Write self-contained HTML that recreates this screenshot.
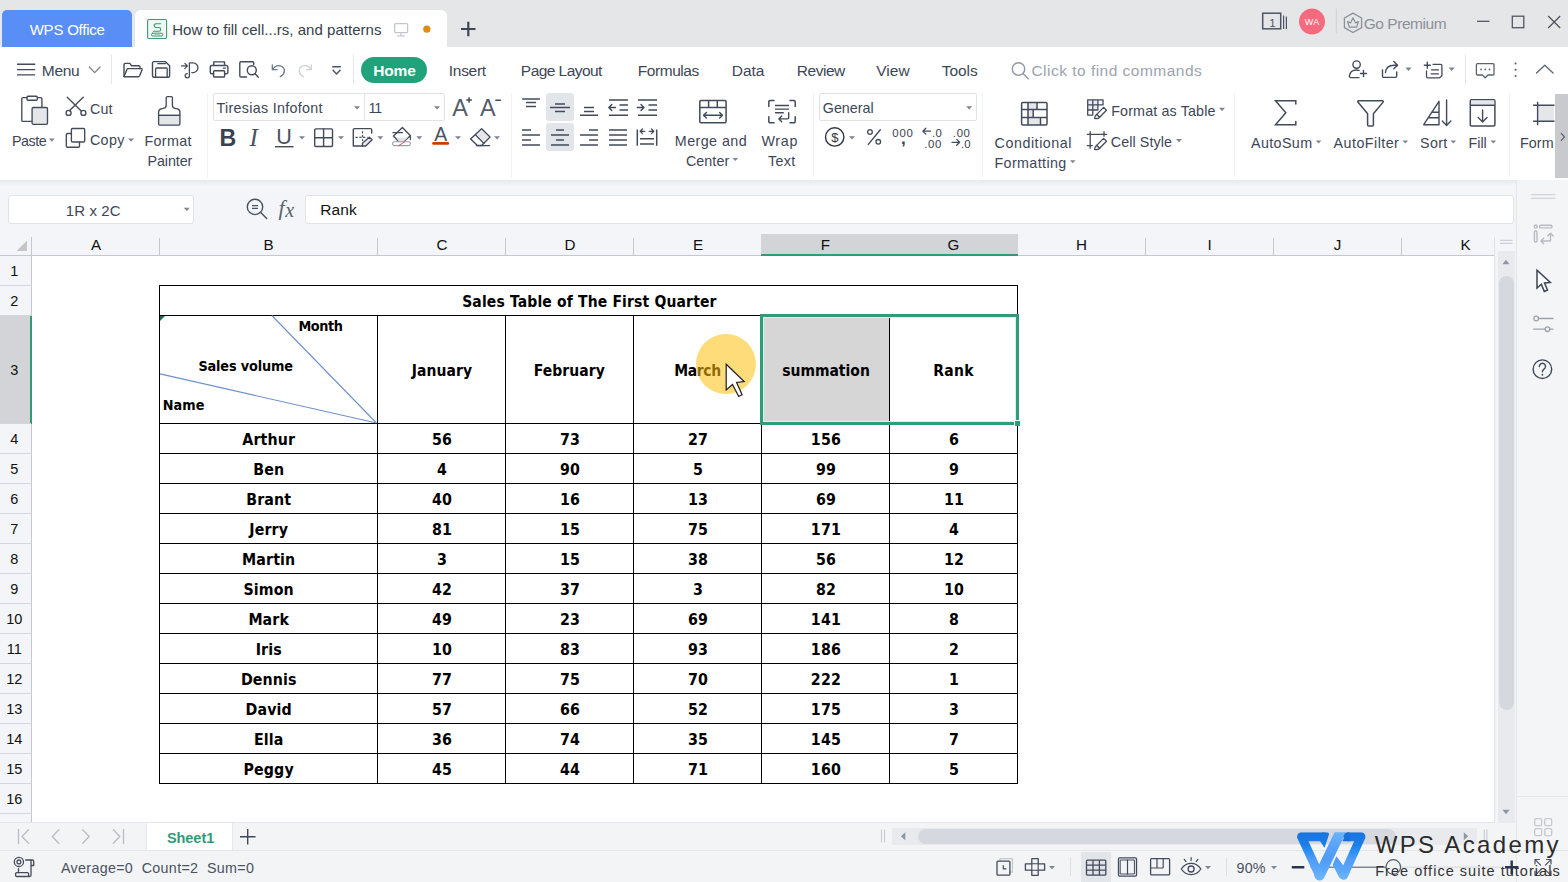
<!DOCTYPE html>
<html lang="en"><head><meta charset="utf-8"><title>WPS Spreadsheets</title>
<style>
html,body{margin:0;padding:0}
body{width:1568px;height:882px;position:relative;overflow:hidden;background:#fff;font-family:'Liberation Sans', sans-serif;}
.t{position:absolute;white-space:pre;line-height:1;}
.b{position:absolute;}
svg{position:absolute;left:0;top:0;overflow:visible}
</style></head><body>
<header id="titlebar">
<div class="b" style="left:0px;top:0px;width:1568px;height:47px;background:#e5e6e8;"></div>
<div class="b" style="left:2px;top:10px;width:130px;height:37px;background:#5a8ef7;border-radius:5px 5px 0 0;"></div>
<div class="b" style="left:135px;top:10px;width:312px;height:37px;background:#ffffff;border-radius:6px 6px 0 0;"></div>
<svg width="1568" height="882" viewBox="0 0 1568 882" fill="none" stroke-linecap="round" stroke-linejoin="round">
<g id="titlebar-icons">
<rect x="147.6" y="19.5" width="19" height="19" rx="1.4" fill="#eef9f4" stroke="#3c9876" stroke-width="1.1"/>
<path d="M160.600 23.700h-4.600a1.900 1.900 0 0 0 0 3.800h2.800a1.900 1.900 0 0 1 0 3.800h-5.300" stroke="#2f9c78" stroke-width="1.100"/>
<rect x="151.500" y="33.200" width="11.200" height="2.800" rx="1.200" stroke="#2f9c78" stroke-width="1"/>
<path d="M155.200 34.600h.1M157.100 34.600h.1M159 34.600h.1" stroke="#2f9c78" stroke-width=".9"/>
<g stroke="#c3c7cd" stroke-width="1.3"><rect x="394.6" y="23.6" width="13" height="9" rx="1"/><path d="M401 32.6v3M397.5 35.8h7"/></g>
<circle cx="426.8" cy="29.2" r="3.6" fill="#e08c14"/>
<path d="M461 29h14.5M468.3 21.8v14.5" stroke="#3d4656" stroke-width="2.2" stroke-linecap="butt"/>
<g stroke="#4d5564" stroke-width="1.5" stroke-linecap="butt" stroke-linejoin="miter"><rect x="1262.7" y="13.2" width="18" height="15.6"/><path d="M1283.6 15.5V29M1286.4 16.5V29" stroke-width="1.2"/></g>
<circle cx="1312" cy="21.6" r="13" fill="#f46a7e"/>
<path d="M1336.3 9v24" stroke="#cfd1d5" stroke-width="1"/>
<g stroke="#8b9098" stroke-width="1.300"><path d="M1353 13.100l8.600 4.850v9.700l-8.600 4.850-8.600-4.850v-9.700z"/><path d="M1347.500 21.500l3 1.400 2.500-5.100 2.500 5.100 3-1.400-1.900 5.700h-7.200z" stroke-width="1.200"/></g>
<g stroke="#4a5261" stroke-width="1.250" stroke-linecap="butt" stroke-linejoin="miter"><path d="M1477 21.3h12.5"/><rect x="1512.3" y="16.2" width="11.5" height="11.5"/><path d="M1548.2 16l12 12M1560.2 16l-12 12"/></g>
</g>
</svg>
<span class="t" id="t0" style="left:29.68px;top:22.00px;font-size:15px;color:#ffffff;letter-spacing:-0.217px;">WPS Office</span>
<span class="t" id="t1" style="left:172.18px;top:22.00px;font-size:15px;color:#363e4c;letter-spacing:0.024px;">How to fill cell...rs, and patterns</span>
<span class="t" id="t2" style="left:1363.65px;top:16.00px;font-size:15.5px;color:#8b9098;letter-spacing:-0.437px;">Go Premium</span>
<span class="t" id="t3" style="left:1304.71px;top:18.00px;font-size:9px;color:#ffffff;letter-spacing:0.287px;">WA</span>
<span class="t" id="t4" style="left:1269.30px;top:18.00px;font-size:11.5px;color:#4d5564;">1</span>
</header>
<nav id="menubar">
<div class="b" style="left:0px;top:47px;width:1568px;height:45px;background:#ffffff;"></div>
<div class="b" style="left:360.7px;top:57px;width:66.5px;height:25.8px;background:#20a37a;border-radius:13px;"></div>
<svg width="1568" height="882" viewBox="0 0 1568 882" fill="none" stroke-linecap="round" stroke-linejoin="round">
<g id="menubar-icons" stroke="#434b5a" stroke-width="1.4">
<path d="M17 64.3h18.2M17 69.6h18.2M17 74.9h18.2" stroke-linecap="butt"/>
<path d="M89.3 67l5.4 5.6 5.4-5.6" stroke="#7b8391" stroke-width="1.3"/>
<path d="M111.5 55v29M353.5 55v29" stroke="#e3e5e9" stroke-width="1"/>
<!-- open -->
<path d="M124 76.6V64.6a1.2 1.2 0 0 1 1.2-1.2h4.6l1.8 2.3h7.2a1.2 1.2 0 0 1 1.2 1.2v1.7"/>
<path d="M124 76.6l2.9-7.2a1.2 1.2 0 0 1 1.1-.8h13.3a.8.8 0 0 1 .8 1.1l-2.6 6.3a1.2 1.2 0 0 1-1.1.7H124.4z"/>
<!-- save -->
<path d="M154 61.600h11.300l4.300 4.200v9.900a1.500 1.500 0 0 1-1.500 1.500h-14.100a1.500 1.500 0 0 1-1.500-1.500V63.100a1.500 1.500 0 0 1 1.500-1.500z"/>
<path d="M155.600 77v-8.200a.8.800 0 0 1 .8-.8h10a.8.800 0 0 1 .8.800V77M157.800 63.600h7.600" stroke-width="1.300"/>
<!-- export -->
<path d="M181.600 65.900h5.800M184.900 63.400l2.500 2.500-2.500 2.500" stroke-width="1.300"/>
<path d="M189.400 75.800V62.800h3.600a4.900 4.900 0 0 1 0 9.800h-1.200M189.400 75.800a2.100 2.100 0 1 1-2.100-2.100" stroke-width="1.300"/>
<!-- print -->
<path d="M213.700 65.500v-3.600h10.800v3.600M213.500 73.700h-1.700a1.500 1.500 0 0 1-1.500-1.500v-5.200a1.500 1.500 0 0 1 1.500-1.500h14.600a1.500 1.500 0 0 1 1.500 1.500v5.200a1.500 1.500 0 0 1-1.500 1.500h-1.700"/>
<rect x="213.600" y="70.700" width="11" height="6.300" rx=".8"/><path d="M223.300 68.200h2" stroke-width="1.300"/>
<!-- preview -->
<path d="M246.500 77h-5.500a1.200 1.200 0 0 1-1.200-1.200V63a1.200 1.200 0 0 1 1.200-1.200h11.500a1.200 1.200 0 0 1 1.200 1.200v1.500"/>
<circle cx="251.800" cy="70.300" r="4.500"/><path d="M255.100 73.700l3.200 3.600"/>
<!-- undo / redo -->
<path d="M272.300 65v4.700h4.700M272.600 69.500c2-3.500 6-5 9.300-3 3.600 2.300 3.600 7.400-1.700 10.300" stroke="#6a7890" stroke-width="1.300"/>
<path d="M311.300 65v4.700h-4.700M311 69.500c-2-3.500-6-5-9.300-3-3.600 2.300-3.600 7.400 1.700 10.300" stroke="#cdd0d6" stroke-width="1.300"/>
<!-- more -->
<path d="M332.200 66.800h8.700M332.600 69.800l3.950 4.100 3.950-4.100" stroke-width="1.400" stroke="#4d5564" stroke-linecap="butt"/>
<!-- search -->
<g stroke="#8f97a4" stroke-width="1.400"><circle cx="1018.500" cy="69" r="6.200"/><path d="M1023 73.600l5.300 5.200"/></g>
<!-- right: add user -->
<circle cx="1356.600" cy="64.600" r="3.700"/><path d="M1359 77.600h-8.200a1.400 1.400 0 0 1-1.400-1.600c.5-3.600 3-6 7-6 1 0 1.800.1 2.600.4M1363.500 70.500v6M1360.500 73.500h6"/>
<!-- share -->
<path d="M1382.500 70v6a1.400 1.400 0 0 0 1.400 1.400h11.400a1.400 1.400 0 0 0 1.400-1.400V72"/><path d="M1385.500 72.500c.3-4.600 3.500-7.300 8.800-7.300h3M1393.800 61.600l3.800 3.600-3.800 3.600"/>
<path d="M1405.400 67.600h6.200l-3.100 3.400z" fill="#7d8593" stroke="none"/>
<!-- insert comment -->
<path d="M1424.300 65.300h6M1427.300 62.300v6"/><path d="M1433 64.300h7.600a1.300 1.300 0 0 1 1.300 1.300v10.200l-2.300 2h-11.800a1.300 1.300 0 0 1-1.300-1.300V71M1431.500 69.800h7M1431 73.800h7.500" stroke-width="1.300"/>
<path d="M1448.600 67.600h6.200l-3.100 3.400z" fill="#7d8593" stroke="none"/>
<path d="M1465.500 55v29" stroke="#e3e5e9" stroke-width="1"/>
<!-- comment -->
<path d="M1477.400 63.700h15.600a1 1 0 0 1 1 1v9.300a1 1 0 0 1-1 1h-5l-2.800 2.700-2.800-2.700h-5a1 1 0 0 1-1-1v-9.300a1 1 0 0 1 1-1z" stroke="#5b6371" stroke-width="1.300"/>
<path d="M1481 69.400h.1M1485.200 69.400h.1M1489.400 69.400h.1" stroke="#5b6371" stroke-width="1.700"/>
<path d="M1515.500 63.500h.1M1515.500 69.700h.1M1515.500 75.900h.1" stroke="#5b6371" stroke-width="2"/>
<path d="M1536.500 73l8.300-7.700 8.300 7.700" stroke="#5b6371" stroke-width="1.300"/>
</g>
</svg>
<span class="t" id="t5" style="left:41.85px;top:63.00px;font-size:15.5px;color:#3d4656;letter-spacing:-0.338px;">Menu</span>
<span class="t" id="t6" style="left:373.15px;top:63.00px;font-size:15.5px;color:#ffffff;font-weight:bold;letter-spacing:-0.113px;">Home</span>
<span class="t" id="t7" style="left:448.85px;top:63.00px;font-size:15.5px;color:#3d4656;letter-spacing:-0.306px;">Insert</span>
<span class="t" id="t8" style="left:520.85px;top:63.00px;font-size:15.5px;color:#3d4656;letter-spacing:-0.556px;">Page Layout</span>
<span class="t" id="t9" style="left:637.85px;top:63.00px;font-size:15.5px;color:#3d4656;letter-spacing:-0.460px;">Formulas</span>
<span class="t" id="t10" style="left:731.85px;top:63.00px;font-size:15.5px;color:#3d4656;letter-spacing:-0.031px;">Data</span>
<span class="t" id="t11" style="left:796.85px;top:63.00px;font-size:15.5px;color:#3d4656;letter-spacing:-0.483px;">Review</span>
<span class="t" id="t12" style="left:876.15px;top:63.00px;font-size:15.5px;color:#3d4656;letter-spacing:0.075px;">View</span>
<span class="t" id="t13" style="left:941.65px;top:63.00px;font-size:15.5px;color:#3d4656;letter-spacing:-0.012px;">Tools</span>
<span class="t" id="t14" style="left:1031.45px;top:63.00px;font-size:15.5px;color:#9ba3af;letter-spacing:0.482px;">Click to find commands</span>
</nav>
<div id="ribbon" role="toolbar">
<div class="b" style="left:0px;top:92px;width:1568px;height:88px;background:#ffffff;"></div>
<div class="b" style="left:213px;top:93px;width:231.5px;height:28px;background:#ffffff;border:1px solid #dfe2e6;border-radius:2px;box-sizing:border-box;"></div>
<div class="b" style="left:364px;top:94px;width:1px;height:26px;background:#e3e6ea;"></div>
<div class="b" style="left:819px;top:93px;width:157.5px;height:28px;background:#ffffff;border:1px solid #dfe2e6;border-radius:2px;box-sizing:border-box;"></div>
<div class="b" style="left:546px;top:93px;width:28px;height:27.6px;background:#e2e5e9;border-radius:3px;"></div>
<div class="b" style="left:546px;top:123px;width:28px;height:27.6px;background:#e2e5e9;border-radius:3px;"></div>
<div class="b" style="left:206.5px;top:93px;width:1px;height:84px;background:#eff1f3;"></div>
<div class="b" style="left:510.5px;top:93px;width:1px;height:84px;background:#eff1f3;"></div>
<div class="b" style="left:812.5px;top:93px;width:1px;height:84px;background:#eff1f3;"></div>
<div class="b" style="left:982px;top:93px;width:1px;height:84px;background:#eff1f3;"></div>
<div class="b" style="left:1234.3px;top:93px;width:1px;height:84px;background:#eff1f3;"></div>
<div class="b" style="left:1508.5px;top:93px;width:1px;height:84px;background:#eff1f3;"></div>
<div class="b" style="left:1555px;top:94px;width:13px;height:84px;background:#c9cacd;"></div>
<svg width="1568" height="882" viewBox="0 0 1568 882" fill="none" stroke-linecap="round" stroke-linejoin="round">
<g id="ribbon-a" stroke="#434b5a" stroke-width="1.350">
<!-- paste -->
<path d="M27 97.600h-4a1.200 1.200 0 0 0-1.200 1.200v21.400a1.200 1.200 0 0 0 1.200 1.200h8.800M37.300 97.600h3.400a1.200 1.200 0 0 1 1.200 1.200v8.400"/>
<rect x="27" y="96.200" width="10.300" height="4.100" rx="1"/>
<rect x="32.100" y="107.500" width="15.400" height="16.800" rx="1.200" fill="#e4e6ea"/>
<path d="M48.8 138.5h6l-3.0 3.2z" fill="#7d8593" stroke="none"/>
<!-- cut -->
<path d="M67.200 97.300l13.800 13.500M83.200 97.300l-13.800 13.500"/><circle cx="68.600" cy="112.900" r="2.500"/><circle cx="83.400" cy="112.900" r="2.500"/>
<!-- copy -->
<rect x="71.400" y="128.500" width="13.300" height="13.500" rx="1.200"/>
<path d="M71.400 133.500h-3.900a1.200 1.200 0 0 0-1.200 1.200v11.400a1.200 1.200 0 0 0 1.200 1.200h10.800a1.200 1.200 0 0 0 1.200-1.200v-4"/>
<path d="M128 138.5h6l-3.0 3.2z" fill="#7d8593" stroke="none"/>
<!-- format painter -->
<path d="M159.200 115.400h20" />
<rect x="159.200" y="115.400" width="20" height="9.500" fill="#e4e6ea" stroke="none"/>
<path d="M166.200 97.800a1.200 1.200 0 0 1 1.200-1.200h3.800a1.200 1.200 0 0 1 1.200 1.200v7.400q0 2.600 2.600 3.100l2.400.5q2.500.6 2.500 3.200v12.100a1 1 0 0 1-1 1h-19.300a1 1 0 0 1-1-1v-12.100q0-2.600 2.500-3.200l2.400-.5q2.700-.5 2.700-3.100z"/>
<path d="M158.600 115.400h21.200"/>
</g>
<g id="ribbon-font" stroke="#434b5a" stroke-width="1.4">
<path d="M354 106.3h6l-3.0 3.2z" fill="#7d8593" stroke="none"/><path d="M434 106.3h6l-3.0 3.2z" fill="#7d8593" stroke="none"/>
<path d="M466.300 100h5.600M469.100 97.200v5.600M495.300 100.200h5.600" stroke-width="1.500" stroke-linecap="butt"/>
<path d="M275 146.700h18.600" stroke-linecap="butt"/><path d="M299 136.3h6l-3.0 3.2z" fill="#7d8593" stroke="none"/>
<rect x="314.700" y="128.900" width="17.800" height="17.600" rx="1"/><path d="M323.600 129v17.400M314.800 137.700h17.600"/><path d="M338 136.3h6l-3.0 3.2z" fill="#7d8593" stroke="none"/>
<!-- cell format -->
<path d="M371.700 133v-3.200a1.200 1.200 0 0 0-1.200-1.200h-16a1.200 1.200 0 0 0-1.200 1.200v16.200h9"/>
<path d="M355.500 137.300h12M362.500 131.300v11" stroke-dasharray="2.200 1.600" stroke-width="1.200" stroke-linecap="butt"/>
<path d="M369.300 137.200l2.800 2.600-6.300 6.200h-3.400v-2.800z" fill="#e4e6ea" stroke-width="1.300"/><path d="M377.3 136.3h6l-3.0 3.2z" fill="#7d8593" stroke="none"/>
<!-- fill bucket -->
<path d="M402.400 127.500l8 8.300-7.200 6.200h-4l-5.700-6z" /><path d="M393 132.700h9.500M410.400 136v3.500" stroke-width="1.300"/>
<path d="M396 137.500h12l-4.800 4.300h-4z" fill="#dfe2e6" stroke="none"/>
<rect x="392.600" y="141.800" width="17.800" height="3.800" rx="1.800" stroke="#9b9fa6" stroke-width="1.100" fill="#fff"/><path d="M399 145.400l5.500-3.400" stroke="#d9472b" stroke-width=".9"/><path d="M416.3 136.3h6l-3.0 3.2z" fill="#7d8593" stroke="none"/>
<!-- font color -->
<rect x="432.200" y="142" width="16.900" height="2.800" rx="1.300" fill="#d2380f" stroke="none"/><path d="M455 136.3h6l-3.0 3.2z" fill="#7d8593" stroke="none"/>
<!-- eraser -->
<path d="M481.600 128.800l8.400 8.300-8.400 8.400h-4.200l-6.800-6.600z"/><path d="M475.500 134.800l8.300 8.400M476.500 145.600h13"/>
<path d="M481.600 130.200l7 6.900-4.900 4.900-6.900-7z" fill="#e4e6ea" stroke="none"/><path d="M494 136.3h6l-3.0 3.2z" fill="#7d8593" stroke="none"/>
</g>
<g id="ribbon-align" stroke="#434b5a" stroke-width="1.500" stroke-linecap="butt">
<path d="M522.2 98.9H539.9M526 102.6H536M526 106.4H536M555 104H565M550 107.6H570M555 111.4H565M584 107.4H594M584 111.4H594M580 115.2H598M609 99.9H628M619.5 105H628M619.5 110H628M609 115.2H628M638 99.9H657M648.5 105H657M648.5 110H657M638 115.2H657M522 130.1H531M522 135.1H540M522 140.1H531M522 145.1H540M556 130.1H564M551 135.1H569M556 140.1H564M551 145.1H569M589 130.1H598M580 135.1H598M589 140.1H598M580 145.1H598M609 130.1H627M609 135.1H627M609 140.1H627M609 145.1H627M640 138.8H654M640 144H654M637.3 129.600V145.800M656.700 129.600V145.800"/>
<path d="M608.800 107.500h6.700M611.800 104.500l-3 3 3 3M637.300 107.500h6.700M641 104.500l3 3-3 3" stroke-linecap="round" stroke-width="1.400"/>
<path d="M640.300 131.300h4.500M642.500 129l-2.300 2.300 2.300 2.300M653.700 131.300h-4.500M651.500 129l2.300 2.300-2.300 2.300" stroke-linecap="round" stroke-width="1.300"/>
</g>
<g id="ribbon-merge" stroke="#434b5a" stroke-width="1.500">
<rect x="699.800" y="100.500" width="26.300" height="22.200" rx="1.200"/><path d="M699.800 107.600h26.300M708.600 100.500v7.100M717.300 100.500v7.100" stroke-linecap="butt"/>
<path d="M703.600 115.300h18.800M706.400 112.500l-2.900 2.800 2.900 2.800M719.600 112.500l2.900 2.800-2.900 2.800" stroke-width="1.400"/>
<path d="M732.5 158.1h5.6l-2.8 3z" fill="#7d8593" stroke="none"/>
<path d="M768.800 106.500v-4.800a1.200 1.200 0 0 1 1.200-1.200h4M790 100.500h4a1.200 1.200 0 0 1 1.200 1.200v4.800M795.200 116.700v4.800a1.200 1.200 0 0 1-1.200 1.200h-4M774 122.700h-4a1.200 1.200 0 0 1-1.200-1.200v-4.800"/>
<path d="M775 105.500h14M775 109.100h14M775 112.700h8.800" stroke-linecap="butt" stroke-width="1.400"/>
<path d="M788.700 112.800v5a1.100 1.100 0 0 1-1.100 1.100h-8.400M781.700 116.100l-2.800 2.800 2.800 2.800" stroke-width="1.400"/>
<!-- number format -->
<circle cx="834.700" cy="136.900" r="9.200" stroke="#2e3440" stroke-width="1.400"/><path d="M849 136.3h6l-3.0 3.2z" fill="#7d8593" stroke="none"/>
<circle cx="870" cy="132" r="2.300" stroke-width="1.300"/><circle cx="878.300" cy="141.800" r="2.300" stroke-width="1.300"/><path d="M880.300 129.800l-12 14.600" stroke-width="1.400"/>
<path d="M930.500 131.200h-7.600M925.800 128.300l-2.900 2.900 2.900 2.900M952 142.300h7.600M956.700 139.400l2.900 2.900-2.900 2.900" stroke-width="1.300"/>
<path d="M966.2 106.3h6l-3.0 3.2z" fill="#7d8593" stroke="none"/>
</g>
<g id="ribbon-styles" stroke="#434b5a" stroke-width="1.500">
<rect x="1028" y="102.400" width="9" height="7.200" fill="#e4e6ea" stroke="none"/><rect x="1028" y="109.600" width="5.200" height="7.800" fill="#e4e6ea" stroke="none"/><rect x="1028" y="117.400" width="12.500" height="7.500" fill="#e4e6ea" stroke="none"/>
<rect x="1021.600" y="102.400" width="25.400" height="22.500" rx="1.200"/>
<path d="M1021.600 109.600h25.400M1021.600 117.400h25.400M1028 102.400v22.500M1037 102.400v7.200M1033.200 109.600v7.800M1040.500 117.400v7.500" stroke-linecap="butt"/>
<path d="M1070 160.3h5.6l-2.8 3z" fill="#7d8593" stroke="none"/>
<g stroke-width="1.300" stroke-linecap="butt"><rect x="1087.800" y="100" width="10.200" height="10.200" fill="#e9ebee" stroke="none"/>
<path d="M1087.700 99.800h15.300v5.100h-15.300zM1087.700 104.900v10.200h5.100v-15.300M1087.700 110h10.200v-10.200"/></g>
<g transform="translate(0 0)"><path d="M1103.600 107.400l2.900 2.800-6.900 7-2.900-2.800z" stroke-width="1.300"/><path d="M1096.700 114.400l2.900 2.800c-.6 1.400-2.600 1.700-5.100 1.300.3-1.900.9-3.500 2.200-4.100z" fill="#e4e6ea" stroke-width="1.200"/></g>
<path d="M1219 107.8h6l-3.0 3.2z" fill="#7d8593" stroke="none"/>
<g stroke-width="1.300" stroke-linecap="butt"><path d="M1086.800 134.400h20.400M1090.200 131.300v17.500M1086.800 145.700h6M1104 131.300v5.400"/></g>
<g transform="translate(0 31)"><path d="M1103.600 107.400l2.900 2.800-6.900 7-2.900-2.800z" stroke-width="1.300"/><path d="M1096.700 114.400l2.900 2.800c-.6 1.400-2.600 1.700-5.100 1.300.3-1.900.9-3.500 2.200-4.100z" fill="#e4e6ea" stroke-width="1.200"/></g>
<path d="M1176 139h6l-3.0 3.2z" fill="#7d8593" stroke="none"/>
<!-- autosum -->
<path d="M1295.800 104v-3.200h-20.300l10.300 11.900-10.300 12h20.300v-3.200" stroke-width="1.500" stroke-linejoin="miter"/><path d="M1315.8 140.5h5.6l-2.8 3z" fill="#7d8593" stroke="none"/>
<!-- autofilter -->
<path d="M1358.500 100.800h24a.8.800 0 0 1 .6 1.300l-9.700 11.600v11.200a1 1 0 0 1-1 1h-3.800a1 1 0 0 1-1-1v-11.200l-9.700-11.600a.8.800 0 0 1 .6-1.300z" stroke-width="1.500"/><path d="M1402.5 140.5h5.6l-2.8 3z" fill="#7d8593" stroke="none"/>
<!-- sort -->
<path d="M1439 101.300v23.400h-15.300zM1431.500 112.300h7.500M1428 117.700h11" stroke-width="1.400"/><path d="M1446.600 100v25.300M1442.300 121l4.300 4.600 4.300-4.600" stroke-width="1.400"/><path d="M1450.5 140.5h5.6l-2.8 3z" fill="#7d8593" stroke="none"/>
<!-- fill -->
<rect x="1470.300" y="99.700" width="24.600" height="26.300" rx="1.200" stroke-width="1.500"/><rect x="1471" y="100.400" width="23.200" height="4.600" fill="#e4e6ea" stroke="none"/><path d="M1470.300 105.300h24.600" stroke-linecap="butt"/><path d="M1482.600 110v11.500M1478.200 117.500l4.400 4.400 4.400-4.400" stroke-width="1.400"/><path d="M1490.5 140.5h5.6l-2.8 3z" fill="#7d8593" stroke="none"/>
<!-- format (cut off) -->
<rect x="1538" y="105.500" width="16" height="15.500" fill="#e4e6ea" stroke="none"/><path d="M1533 105.200h21.500M1533 121.300h21.500M1537.600 101.700v23.600" stroke-width="1.400" stroke-linecap="butt"/>
<path d="M1561.300 133.300l3.200 3.500-3.200 3.500" stroke="#555d6b" stroke-width="1.200"/>
</g>
</svg>
<span class="t" id="t15" style="left:11.91px;top:134.00px;font-size:14.3px;color:#3d4656;letter-spacing:-0.452px;">Paste</span>
<span class="t" id="t16" style="left:89.91px;top:102.00px;font-size:14.3px;color:#3d4656;letter-spacing:0.184px;">Cut</span>
<span class="t" id="t17" style="left:89.91px;top:133.00px;font-size:14.3px;color:#3d4656;letter-spacing:0.353px;">Copy</span>
<span class="t" id="t18" style="left:144.51px;top:134.00px;font-size:14.3px;color:#3d4656;letter-spacing:0.320px;">Format</span>
<span class="t" id="t19" style="left:147.51px;top:154.00px;font-size:14.3px;color:#3d4656;letter-spacing:-0.087px;">Painter</span>
<span class="t" id="t20" style="left:216.51px;top:101.00px;font-size:14.3px;color:#3d4656;letter-spacing:0.295px;">Tiresias Infofont</span>
<span class="t" id="t21" style="left:368.41px;top:101.00px;font-size:14.3px;color:#3d4656;letter-spacing:-0.971px;">11</span>
<span class="t" id="t22" style="left:674.81px;top:134.00px;font-size:14.3px;color:#3d4656;letter-spacing:0.438px;">Merge and</span>
<span class="t" id="t23" style="left:686.01px;top:154.00px;font-size:14.3px;color:#3d4656;letter-spacing:0.047px;">Center</span>
<span class="t" id="t24" style="left:761.41px;top:134.00px;font-size:14.3px;color:#3d4656;letter-spacing:0.724px;">Wrap</span>
<span class="t" id="t25" style="left:768.01px;top:154.00px;font-size:14.3px;color:#3d4656;letter-spacing:0.367px;">Text</span>
<span class="t" id="t26" style="left:822.81px;top:101.00px;font-size:14.3px;color:#3d4656;">General</span>
<span class="t" id="t27" style="left:994.61px;top:136.00px;font-size:14.3px;color:#3d4656;letter-spacing:0.532px;">Conditional</span>
<span class="t" id="t28" style="left:994.41px;top:156.00px;font-size:14.3px;color:#3d4656;letter-spacing:0.396px;">Formatting</span>
<span class="t" id="t29" style="left:1111.21px;top:104.00px;font-size:14.3px;color:#3d4656;letter-spacing:0.143px;">Format as Table</span>
<span class="t" id="t30" style="left:1110.81px;top:135.00px;font-size:14.3px;color:#3d4656;letter-spacing:0.091px;">Cell Style</span>
<span class="t" id="t31" style="left:1251.01px;top:136.00px;font-size:14.3px;color:#3d4656;letter-spacing:0.384px;">AutoSum</span>
<span class="t" id="t32" style="left:1333.61px;top:136.00px;font-size:14.3px;color:#3d4656;letter-spacing:0.451px;">AutoFilter</span>
<span class="t" id="t33" style="left:1420.01px;top:136.00px;font-size:14.3px;color:#3d4656;letter-spacing:0.367px;">Sort</span>
<span class="t" id="t34" style="left:1468.61px;top:136.00px;font-size:14.3px;color:#3d4656;letter-spacing:-0.041px;">Fill</span>
<span class="t" id="t35" style="left:1519.91px;top:136.00px;font-size:14.3px;color:#3d4656;letter-spacing:0.111px;">Form</span>
<span class="t" id="t36" style="left:452.31px;top:97.00px;font-size:23.4px;color:#555d6b;letter-spacing:1.248px;">A</span>
<span class="t" id="t37" style="left:479.91px;top:97.00px;font-size:23.4px;color:#555d6b;letter-spacing:1.648px;">A</span>
<span class="t" id="t38" style="left:219.52px;top:127.00px;font-size:23.2px;color:#3a4252;font-weight:bold;letter-spacing:-0.414px;">B</span>
<span class="t" id="t39" style="left:249.62px;top:125.00px;font-size:25px;color:#4a5261;font-style:italic;font-family:'Liberation Serif', serif;letter-spacing:4.297px;">I</span>
<span class="t" id="t40" style="left:276.21px;top:126.00px;font-size:21.6px;color:#4a5261;letter-spacing:0.659px;">U</span>
<span class="t" id="t41" style="left:434.13px;top:125.00px;font-size:19.5px;color:#4a5261;letter-spacing:0.632px;">A</span>
<span class="t" id="t42" style="left:831.20px;top:131.00px;font-size:13px;color:#2e3440;">$</span>
<span class="t" id="t43" style="left:892.37px;top:128.00px;font-size:11.4px;color:#3a4150;letter-spacing:0.794px;">000</span>
<span class="t" id="t44" style="left:901.07px;top:130.00px;font-size:17px;color:#3a4150;font-weight:bold;letter-spacing:0.251px;">,</span>
<span class="t" id="t45" style="left:931.97px;top:128.00px;font-size:11.4px;color:#3a4150;letter-spacing:0.248px;">.0</span>
<span class="t" id="t46" style="left:924.37px;top:139.00px;font-size:11.4px;color:#3a4150;letter-spacing:0.584px;">.00</span>
<span class="t" id="t47" style="left:952.87px;top:128.00px;font-size:11.4px;color:#3a4150;letter-spacing:0.618px;">.00</span>
<span class="t" id="t48" style="left:960.97px;top:139.00px;font-size:11.4px;color:#3a4150;letter-spacing:0.048px;">.0</span>
</div>
<div id="formulabar" role="group">
<div class="b" style="left:0px;top:180px;width:1568px;height:5px;background:linear-gradient(#e6e8eb,#f2f4f7);"></div>
<div class="b" style="left:0px;top:185px;width:1568px;height:49px;background:#f3f5f8;"></div>
<div class="b" style="left:8px;top:195px;width:185.5px;height:28.5px;background:#ffffff;border:1px solid #e0e3e7;border-radius:3px;box-sizing:border-box;"></div>
<div class="b" style="left:305px;top:195px;width:1208.5px;height:28.5px;background:#ffffff;border:1px solid #e0e3e7;border-radius:3px;box-sizing:border-box;"></div>
<svg width="1568" height="882" viewBox="0 0 1568 882" fill="none" stroke-linecap="round" stroke-linejoin="round">
<g id="fbar" stroke="#4a5261" stroke-width="1.400">
<path d="M183.8 207.8h6l-3.0 3.2z" fill="#7d8593" stroke="none"/>
<circle cx="255" cy="206.900" r="7.700"/><path d="M260.700 212.600l6 6"/><path d="M252 205.600h6M252 208.400h6" stroke-width="1.200" stroke-linecap="butt"/>
</g>
</svg>
<span class="t" id="t49" style="left:65.67px;top:203.00px;font-size:15px;color:#3d4656;letter-spacing:0.127px;">1R x 2C</span>
<span class="t" id="t50" style="left:320.15px;top:202.00px;font-size:15.5px;color:#111111;letter-spacing:0.110px;">Rank</span>
<span class="t" id="t51" style="left:278.50px;top:197.00px;font-size:22px;color:#5a6270;font-style:italic;font-family:'Liberation Serif', serif;">f</span>
<span class="t" id="t52" style="left:285.30px;top:200.00px;font-size:20px;color:#5a6270;font-style:italic;font-family:'Liberation Serif', serif;">x</span>
</div>
<main id="sheet">
<div class="b" style="left:0px;top:234px;width:1516px;height:22px;background:#f3f5f8;"></div>
<div class="b" style="left:0px;top:256px;width:31px;height:567px;background:#f3f5f8;"></div>
<div class="b" style="left:1495px;top:234px;width:21px;height:589px;background:#f3f5f8;"></div>
<div class="b" style="left:32px;top:256px;width:1463px;height:567px;background:#ffffff;"></div>
<div class="b" style="left:761px;top:234px;width:257px;height:21px;background:#d2d4d8;"></div>
<div class="b" style="left:0px;top:255px;width:1495px;height:1px;background:#c3c8d1;"></div>
<div class="b" style="left:761px;top:254px;width:257px;height:2px;background:#2f9c78;"></div>
<div class="b" style="left:31px;top:237px;width:1px;height:586px;background:#c3c8d1;"></div>
<div class="b" style="left:0px;top:316px;width:31px;height:107px;background:#d2d4d8;"></div>
<div class="b" style="left:30px;top:316px;width:2px;height:108px;background:#2f9c78;"></div>
<div class="b" style="left:1494px;top:237px;width:1px;height:586px;background:#dfe2e7;"></div>
<div class="b" style="left:159px;top:238px;width:1px;height:17px;background:#c3c8d1;"></div>
<div class="b" style="left:377px;top:238px;width:1px;height:17px;background:#c3c8d1;"></div>
<div class="b" style="left:505px;top:238px;width:1px;height:17px;background:#c3c8d1;"></div>
<div class="b" style="left:633px;top:238px;width:1px;height:17px;background:#c3c8d1;"></div>
<div class="b" style="left:1145px;top:238px;width:1px;height:17px;background:#c3c8d1;"></div>
<div class="b" style="left:1273px;top:238px;width:1px;height:17px;background:#c3c8d1;"></div>
<div class="b" style="left:1401px;top:238px;width:1px;height:17px;background:#c3c8d1;"></div>
<div class="b" style="left:0px;top:285px;width:31px;height:1px;background:#d3d7de;"></div>
<div class="b" style="left:0px;top:315px;width:31px;height:1px;background:#d3d7de;"></div>
<div class="b" style="left:0px;top:423px;width:31px;height:1px;background:#d3d7de;"></div>
<div class="b" style="left:0px;top:453px;width:31px;height:1px;background:#d3d7de;"></div>
<div class="b" style="left:0px;top:483px;width:31px;height:1px;background:#d3d7de;"></div>
<div class="b" style="left:0px;top:513px;width:31px;height:1px;background:#d3d7de;"></div>
<div class="b" style="left:0px;top:543px;width:31px;height:1px;background:#d3d7de;"></div>
<div class="b" style="left:0px;top:573px;width:31px;height:1px;background:#d3d7de;"></div>
<div class="b" style="left:0px;top:603px;width:31px;height:1px;background:#d3d7de;"></div>
<div class="b" style="left:0px;top:633px;width:31px;height:1px;background:#d3d7de;"></div>
<div class="b" style="left:0px;top:663px;width:31px;height:1px;background:#d3d7de;"></div>
<div class="b" style="left:0px;top:693px;width:31px;height:1px;background:#d3d7de;"></div>
<div class="b" style="left:0px;top:723px;width:31px;height:1px;background:#d3d7de;"></div>
<div class="b" style="left:0px;top:753px;width:31px;height:1px;background:#d3d7de;"></div>
<div class="b" style="left:0px;top:783px;width:31px;height:1px;background:#d3d7de;"></div>
<div class="b" style="left:0px;top:813px;width:31px;height:1px;background:#d3d7de;"></div>
<div class="b" style="left:764px;top:318px;width:125px;height:104px;background:#d6d6d6;"></div>
<div class="b" style="left:159px;top:285px;width:859px;height:1px;background:#000000;"></div>
<div class="b" style="left:159px;top:315px;width:859px;height:1px;background:#000000;"></div>
<div class="b" style="left:159px;top:423px;width:859px;height:1px;background:#000000;"></div>
<div class="b" style="left:159px;top:453px;width:859px;height:1px;background:#000000;"></div>
<div class="b" style="left:159px;top:483px;width:859px;height:1px;background:#000000;"></div>
<div class="b" style="left:159px;top:513px;width:859px;height:1px;background:#000000;"></div>
<div class="b" style="left:159px;top:543px;width:859px;height:1px;background:#000000;"></div>
<div class="b" style="left:159px;top:573px;width:859px;height:1px;background:#000000;"></div>
<div class="b" style="left:159px;top:603px;width:859px;height:1px;background:#000000;"></div>
<div class="b" style="left:159px;top:633px;width:859px;height:1px;background:#000000;"></div>
<div class="b" style="left:159px;top:663px;width:859px;height:1px;background:#000000;"></div>
<div class="b" style="left:159px;top:693px;width:859px;height:1px;background:#000000;"></div>
<div class="b" style="left:159px;top:723px;width:859px;height:1px;background:#000000;"></div>
<div class="b" style="left:159px;top:753px;width:859px;height:1px;background:#000000;"></div>
<div class="b" style="left:159px;top:783px;width:859px;height:1px;background:#000000;"></div>
<div class="b" style="left:159px;top:285px;width:1px;height:499px;background:#000000;"></div>
<div class="b" style="left:1017px;top:285px;width:1px;height:499px;background:#000000;"></div>
<div class="b" style="left:377px;top:315px;width:1px;height:469px;background:#000000;"></div>
<div class="b" style="left:505px;top:315px;width:1px;height:469px;background:#000000;"></div>
<div class="b" style="left:633px;top:315px;width:1px;height:469px;background:#000000;"></div>
<div class="b" style="left:761px;top:315px;width:1px;height:469px;background:#000000;"></div>
<div class="b" style="left:889px;top:315px;width:1px;height:469px;background:#000000;"></div>
<div class="b" style="left:760px;top:314px;width:259px;height:111px;background:transparent;border:3px solid #2f9c78;box-sizing:border-box;"></div>
<div class="b" style="left:763px;top:317px;width:253px;height:105px;background:transparent;border:1px solid #d6f3ef;box-sizing:border-box;"></div>
<div class="b" style="left:1014px;top:420px;width:6px;height:6px;background:#ffffff;"></div>
<div class="b" style="left:1015px;top:421px;width:5px;height:5px;background:#2f9c78;"></div>
<svg width="1568" height="882" viewBox="0 0 1568 882" fill="none" stroke-linecap="round" stroke-linejoin="round">
<path d="M27 240.500v10.500h-10.500z" fill="#c6c6c6" stroke="none"/>
<path d="M271.800 315.500L376.500 423M160 373.900L376.500 423" stroke="#6f90cb" stroke-width="1.100" stroke-linecap="butt"/>
<path d="M160 316h5l-5 5z" fill="#1f6b4c" stroke="none"/>
</svg>
<span class="t" id="t53" style="left:66.00px;top:237.00px;font-size:15.2px;color:#111;width:60px;text-align:center;">A</span>
<span class="t" id="t54" style="left:238.50px;top:237.00px;font-size:15.2px;color:#111;width:60px;text-align:center;">B</span>
<span class="t" id="t55" style="left:412.00px;top:237.00px;font-size:15.2px;color:#111;width:60px;text-align:center;">C</span>
<span class="t" id="t56" style="left:540.00px;top:237.00px;font-size:15.2px;color:#111;width:60px;text-align:center;">D</span>
<span class="t" id="t57" style="left:668.00px;top:237.00px;font-size:15.2px;color:#111;width:60px;text-align:center;">E</span>
<span class="t" id="t58" style="left:795.50px;top:237.00px;font-size:15.2px;color:#111;width:60px;text-align:center;">F</span>
<span class="t" id="t59" style="left:923.50px;top:237.00px;font-size:15.2px;color:#111;width:60px;text-align:center;">G</span>
<span class="t" id="t60" style="left:1051.50px;top:237.00px;font-size:15.2px;color:#111;width:60px;text-align:center;">H</span>
<span class="t" id="t61" style="left:1179.50px;top:237.00px;font-size:15.2px;color:#111;width:60px;text-align:center;">I</span>
<span class="t" id="t62" style="left:1307.50px;top:237.00px;font-size:15.2px;color:#111;width:60px;text-align:center;">J</span>
<span class="t" id="t63" style="left:1435.50px;top:237.00px;font-size:15.2px;color:#111;width:60px;text-align:center;">K</span>
<span class="t" id="t64" style="left:-1.30px;top:264.00px;font-size:14.5px;color:#111;width:31px;text-align:center;">1</span>
<span class="t" id="t65" style="left:-1.30px;top:294.00px;font-size:14.5px;color:#111;width:31px;text-align:center;">2</span>
<span class="t" id="t66" style="left:-1.30px;top:363.00px;font-size:14.5px;color:#111;width:31px;text-align:center;">3</span>
<span class="t" id="t67" style="left:-1.30px;top:432.00px;font-size:14.5px;color:#111;width:31px;text-align:center;">4</span>
<span class="t" id="t68" style="left:-1.30px;top:462.00px;font-size:14.5px;color:#111;width:31px;text-align:center;">5</span>
<span class="t" id="t69" style="left:-1.30px;top:492.00px;font-size:14.5px;color:#111;width:31px;text-align:center;">6</span>
<span class="t" id="t70" style="left:-1.30px;top:522.00px;font-size:14.5px;color:#111;width:31px;text-align:center;">7</span>
<span class="t" id="t71" style="left:-1.30px;top:552.00px;font-size:14.5px;color:#111;width:31px;text-align:center;">8</span>
<span class="t" id="t72" style="left:-1.30px;top:582.00px;font-size:14.5px;color:#111;width:31px;text-align:center;">9</span>
<span class="t" id="t73" style="left:-1.30px;top:612.00px;font-size:14.5px;color:#111;width:31px;text-align:center;">10</span>
<span class="t" id="t74" style="left:-1.30px;top:642.00px;font-size:14.5px;color:#111;width:31px;text-align:center;">11</span>
<span class="t" id="t75" style="left:-1.30px;top:672.00px;font-size:14.5px;color:#111;width:31px;text-align:center;">12</span>
<span class="t" id="t76" style="left:-1.30px;top:702.00px;font-size:14.5px;color:#111;width:31px;text-align:center;">13</span>
<span class="t" id="t77" style="left:-1.30px;top:732.00px;font-size:14.5px;color:#111;width:31px;text-align:center;">14</span>
<span class="t" id="t78" style="left:-1.30px;top:762.00px;font-size:14.5px;color:#111;width:31px;text-align:center;">15</span>
<span class="t" id="t79" style="left:-1.30px;top:792.00px;font-size:14.5px;color:#111;width:31px;text-align:center;">16</span>
<span class="t" id="t80" style="left:462.15px;top:295.00px;font-size:15.5px;color:#000;font-weight:bold;font-family:'DejaVu Sans Condensed', 'Liberation Sans', sans-serif;letter-spacing:0.167px;">Sales Table of The First Quarter</span>
<span class="t" id="t81" style="left:298.41px;top:319.00px;font-size:14.3px;color:#000;font-weight:bold;font-family:'DejaVu Sans Condensed', 'Liberation Sans', sans-serif;letter-spacing:-0.402px;">Month</span>
<span class="t" id="t82" style="left:198.41px;top:359.00px;font-size:14.3px;color:#000;font-weight:bold;font-family:'DejaVu Sans Condensed', 'Liberation Sans', sans-serif;letter-spacing:-0.135px;">Sales volume</span>
<span class="t" id="t83" style="left:162.71px;top:398.00px;font-size:14.3px;color:#000;font-weight:bold;font-family:'DejaVu Sans Condensed', 'Liberation Sans', sans-serif;letter-spacing:0.106px;">Name</span>
<span class="t" id="t84" style="left:411.85px;top:364.00px;font-size:15.5px;color:#000;font-weight:bold;font-family:'DejaVu Sans Condensed', 'Liberation Sans', sans-serif;letter-spacing:0.071px;">January</span>
<span class="t" id="t85" style="left:533.65px;top:364.00px;font-size:15.5px;color:#000;font-weight:bold;font-family:'DejaVu Sans Condensed', 'Liberation Sans', sans-serif;letter-spacing:0.087px;">February</span>
<span class="t" id="t86" style="left:674.15px;top:364.00px;font-size:15.5px;color:#000;font-weight:bold;font-family:'DejaVu Sans Condensed', 'Liberation Sans', sans-serif;letter-spacing:-0.350px;">March</span>
<span class="t" id="t87" style="left:782.15px;top:364.00px;font-size:15.5px;color:#000;font-weight:bold;font-family:'DejaVu Sans Condensed', 'Liberation Sans', sans-serif;letter-spacing:0.006px;">summation</span>
<span class="t" id="t88" style="left:933.35px;top:364.00px;font-size:15.5px;color:#000;font-weight:bold;font-family:'DejaVu Sans Condensed', 'Liberation Sans', sans-serif;letter-spacing:0.267px;">Rank</span>
<span class="t" id="t89" style="left:208.70px;top:432.00px;font-size:15.8px;color:#000;font-weight:bold;font-family:'DejaVu Sans Condensed', 'Liberation Sans', sans-serif;width:120px;text-align:center;letter-spacing:0.1px;">Arthur</span>
<span class="t" id="t90" style="left:382.00px;top:432.00px;font-size:15.8px;color:#000;font-weight:bold;font-family:'DejaVu Sans Condensed', 'Liberation Sans', sans-serif;width:120px;text-align:center;letter-spacing:0.2px;">56</span>
<span class="t" id="t91" style="left:510.00px;top:432.00px;font-size:15.8px;color:#000;font-weight:bold;font-family:'DejaVu Sans Condensed', 'Liberation Sans', sans-serif;width:120px;text-align:center;letter-spacing:0.2px;">73</span>
<span class="t" id="t92" style="left:638.00px;top:432.00px;font-size:15.8px;color:#000;font-weight:bold;font-family:'DejaVu Sans Condensed', 'Liberation Sans', sans-serif;width:120px;text-align:center;letter-spacing:0.2px;">27</span>
<span class="t" id="t93" style="left:766.00px;top:432.00px;font-size:15.8px;color:#000;font-weight:bold;font-family:'DejaVu Sans Condensed', 'Liberation Sans', sans-serif;width:120px;text-align:center;letter-spacing:0.2px;">156</span>
<span class="t" id="t94" style="left:894.00px;top:432.00px;font-size:15.8px;color:#000;font-weight:bold;font-family:'DejaVu Sans Condensed', 'Liberation Sans', sans-serif;width:120px;text-align:center;letter-spacing:0.2px;">6</span>
<span class="t" id="t95" style="left:208.70px;top:462.00px;font-size:15.8px;color:#000;font-weight:bold;font-family:'DejaVu Sans Condensed', 'Liberation Sans', sans-serif;width:120px;text-align:center;letter-spacing:0.1px;">Ben</span>
<span class="t" id="t96" style="left:382.00px;top:462.00px;font-size:15.8px;color:#000;font-weight:bold;font-family:'DejaVu Sans Condensed', 'Liberation Sans', sans-serif;width:120px;text-align:center;letter-spacing:0.2px;">4</span>
<span class="t" id="t97" style="left:510.00px;top:462.00px;font-size:15.8px;color:#000;font-weight:bold;font-family:'DejaVu Sans Condensed', 'Liberation Sans', sans-serif;width:120px;text-align:center;letter-spacing:0.2px;">90</span>
<span class="t" id="t98" style="left:638.00px;top:462.00px;font-size:15.8px;color:#000;font-weight:bold;font-family:'DejaVu Sans Condensed', 'Liberation Sans', sans-serif;width:120px;text-align:center;letter-spacing:0.2px;">5</span>
<span class="t" id="t99" style="left:766.00px;top:462.00px;font-size:15.8px;color:#000;font-weight:bold;font-family:'DejaVu Sans Condensed', 'Liberation Sans', sans-serif;width:120px;text-align:center;letter-spacing:0.2px;">99</span>
<span class="t" id="t100" style="left:894.00px;top:462.00px;font-size:15.8px;color:#000;font-weight:bold;font-family:'DejaVu Sans Condensed', 'Liberation Sans', sans-serif;width:120px;text-align:center;letter-spacing:0.2px;">9</span>
<span class="t" id="t101" style="left:208.70px;top:492.00px;font-size:15.8px;color:#000;font-weight:bold;font-family:'DejaVu Sans Condensed', 'Liberation Sans', sans-serif;width:120px;text-align:center;letter-spacing:0.1px;">Brant</span>
<span class="t" id="t102" style="left:382.00px;top:492.00px;font-size:15.8px;color:#000;font-weight:bold;font-family:'DejaVu Sans Condensed', 'Liberation Sans', sans-serif;width:120px;text-align:center;letter-spacing:0.2px;">40</span>
<span class="t" id="t103" style="left:510.00px;top:492.00px;font-size:15.8px;color:#000;font-weight:bold;font-family:'DejaVu Sans Condensed', 'Liberation Sans', sans-serif;width:120px;text-align:center;letter-spacing:0.2px;">16</span>
<span class="t" id="t104" style="left:638.00px;top:492.00px;font-size:15.8px;color:#000;font-weight:bold;font-family:'DejaVu Sans Condensed', 'Liberation Sans', sans-serif;width:120px;text-align:center;letter-spacing:0.2px;">13</span>
<span class="t" id="t105" style="left:766.00px;top:492.00px;font-size:15.8px;color:#000;font-weight:bold;font-family:'DejaVu Sans Condensed', 'Liberation Sans', sans-serif;width:120px;text-align:center;letter-spacing:0.2px;">69</span>
<span class="t" id="t106" style="left:894.00px;top:492.00px;font-size:15.8px;color:#000;font-weight:bold;font-family:'DejaVu Sans Condensed', 'Liberation Sans', sans-serif;width:120px;text-align:center;letter-spacing:0.2px;">11</span>
<span class="t" id="t107" style="left:208.70px;top:522.00px;font-size:15.8px;color:#000;font-weight:bold;font-family:'DejaVu Sans Condensed', 'Liberation Sans', sans-serif;width:120px;text-align:center;letter-spacing:0.1px;">Jerry</span>
<span class="t" id="t108" style="left:382.00px;top:522.00px;font-size:15.8px;color:#000;font-weight:bold;font-family:'DejaVu Sans Condensed', 'Liberation Sans', sans-serif;width:120px;text-align:center;letter-spacing:0.2px;">81</span>
<span class="t" id="t109" style="left:510.00px;top:522.00px;font-size:15.8px;color:#000;font-weight:bold;font-family:'DejaVu Sans Condensed', 'Liberation Sans', sans-serif;width:120px;text-align:center;letter-spacing:0.2px;">15</span>
<span class="t" id="t110" style="left:638.00px;top:522.00px;font-size:15.8px;color:#000;font-weight:bold;font-family:'DejaVu Sans Condensed', 'Liberation Sans', sans-serif;width:120px;text-align:center;letter-spacing:0.2px;">75</span>
<span class="t" id="t111" style="left:766.00px;top:522.00px;font-size:15.8px;color:#000;font-weight:bold;font-family:'DejaVu Sans Condensed', 'Liberation Sans', sans-serif;width:120px;text-align:center;letter-spacing:0.2px;">171</span>
<span class="t" id="t112" style="left:894.00px;top:522.00px;font-size:15.8px;color:#000;font-weight:bold;font-family:'DejaVu Sans Condensed', 'Liberation Sans', sans-serif;width:120px;text-align:center;letter-spacing:0.2px;">4</span>
<span class="t" id="t113" style="left:208.70px;top:552.00px;font-size:15.8px;color:#000;font-weight:bold;font-family:'DejaVu Sans Condensed', 'Liberation Sans', sans-serif;width:120px;text-align:center;letter-spacing:0.1px;">Martin</span>
<span class="t" id="t114" style="left:382.00px;top:552.00px;font-size:15.8px;color:#000;font-weight:bold;font-family:'DejaVu Sans Condensed', 'Liberation Sans', sans-serif;width:120px;text-align:center;letter-spacing:0.2px;">3</span>
<span class="t" id="t115" style="left:510.00px;top:552.00px;font-size:15.8px;color:#000;font-weight:bold;font-family:'DejaVu Sans Condensed', 'Liberation Sans', sans-serif;width:120px;text-align:center;letter-spacing:0.2px;">15</span>
<span class="t" id="t116" style="left:638.00px;top:552.00px;font-size:15.8px;color:#000;font-weight:bold;font-family:'DejaVu Sans Condensed', 'Liberation Sans', sans-serif;width:120px;text-align:center;letter-spacing:0.2px;">38</span>
<span class="t" id="t117" style="left:766.00px;top:552.00px;font-size:15.8px;color:#000;font-weight:bold;font-family:'DejaVu Sans Condensed', 'Liberation Sans', sans-serif;width:120px;text-align:center;letter-spacing:0.2px;">56</span>
<span class="t" id="t118" style="left:894.00px;top:552.00px;font-size:15.8px;color:#000;font-weight:bold;font-family:'DejaVu Sans Condensed', 'Liberation Sans', sans-serif;width:120px;text-align:center;letter-spacing:0.2px;">12</span>
<span class="t" id="t119" style="left:208.70px;top:582.00px;font-size:15.8px;color:#000;font-weight:bold;font-family:'DejaVu Sans Condensed', 'Liberation Sans', sans-serif;width:120px;text-align:center;letter-spacing:0.1px;">Simon</span>
<span class="t" id="t120" style="left:382.00px;top:582.00px;font-size:15.8px;color:#000;font-weight:bold;font-family:'DejaVu Sans Condensed', 'Liberation Sans', sans-serif;width:120px;text-align:center;letter-spacing:0.2px;">42</span>
<span class="t" id="t121" style="left:510.00px;top:582.00px;font-size:15.8px;color:#000;font-weight:bold;font-family:'DejaVu Sans Condensed', 'Liberation Sans', sans-serif;width:120px;text-align:center;letter-spacing:0.2px;">37</span>
<span class="t" id="t122" style="left:638.00px;top:582.00px;font-size:15.8px;color:#000;font-weight:bold;font-family:'DejaVu Sans Condensed', 'Liberation Sans', sans-serif;width:120px;text-align:center;letter-spacing:0.2px;">3</span>
<span class="t" id="t123" style="left:766.00px;top:582.00px;font-size:15.8px;color:#000;font-weight:bold;font-family:'DejaVu Sans Condensed', 'Liberation Sans', sans-serif;width:120px;text-align:center;letter-spacing:0.2px;">82</span>
<span class="t" id="t124" style="left:894.00px;top:582.00px;font-size:15.8px;color:#000;font-weight:bold;font-family:'DejaVu Sans Condensed', 'Liberation Sans', sans-serif;width:120px;text-align:center;letter-spacing:0.2px;">10</span>
<span class="t" id="t125" style="left:208.70px;top:612.00px;font-size:15.8px;color:#000;font-weight:bold;font-family:'DejaVu Sans Condensed', 'Liberation Sans', sans-serif;width:120px;text-align:center;letter-spacing:0.1px;">Mark</span>
<span class="t" id="t126" style="left:382.00px;top:612.00px;font-size:15.8px;color:#000;font-weight:bold;font-family:'DejaVu Sans Condensed', 'Liberation Sans', sans-serif;width:120px;text-align:center;letter-spacing:0.2px;">49</span>
<span class="t" id="t127" style="left:510.00px;top:612.00px;font-size:15.8px;color:#000;font-weight:bold;font-family:'DejaVu Sans Condensed', 'Liberation Sans', sans-serif;width:120px;text-align:center;letter-spacing:0.2px;">23</span>
<span class="t" id="t128" style="left:638.00px;top:612.00px;font-size:15.8px;color:#000;font-weight:bold;font-family:'DejaVu Sans Condensed', 'Liberation Sans', sans-serif;width:120px;text-align:center;letter-spacing:0.2px;">69</span>
<span class="t" id="t129" style="left:766.00px;top:612.00px;font-size:15.8px;color:#000;font-weight:bold;font-family:'DejaVu Sans Condensed', 'Liberation Sans', sans-serif;width:120px;text-align:center;letter-spacing:0.2px;">141</span>
<span class="t" id="t130" style="left:894.00px;top:612.00px;font-size:15.8px;color:#000;font-weight:bold;font-family:'DejaVu Sans Condensed', 'Liberation Sans', sans-serif;width:120px;text-align:center;letter-spacing:0.2px;">8</span>
<span class="t" id="t131" style="left:208.70px;top:642.00px;font-size:15.8px;color:#000;font-weight:bold;font-family:'DejaVu Sans Condensed', 'Liberation Sans', sans-serif;width:120px;text-align:center;letter-spacing:0.1px;">Iris</span>
<span class="t" id="t132" style="left:382.00px;top:642.00px;font-size:15.8px;color:#000;font-weight:bold;font-family:'DejaVu Sans Condensed', 'Liberation Sans', sans-serif;width:120px;text-align:center;letter-spacing:0.2px;">10</span>
<span class="t" id="t133" style="left:510.00px;top:642.00px;font-size:15.8px;color:#000;font-weight:bold;font-family:'DejaVu Sans Condensed', 'Liberation Sans', sans-serif;width:120px;text-align:center;letter-spacing:0.2px;">83</span>
<span class="t" id="t134" style="left:638.00px;top:642.00px;font-size:15.8px;color:#000;font-weight:bold;font-family:'DejaVu Sans Condensed', 'Liberation Sans', sans-serif;width:120px;text-align:center;letter-spacing:0.2px;">93</span>
<span class="t" id="t135" style="left:766.00px;top:642.00px;font-size:15.8px;color:#000;font-weight:bold;font-family:'DejaVu Sans Condensed', 'Liberation Sans', sans-serif;width:120px;text-align:center;letter-spacing:0.2px;">186</span>
<span class="t" id="t136" style="left:894.00px;top:642.00px;font-size:15.8px;color:#000;font-weight:bold;font-family:'DejaVu Sans Condensed', 'Liberation Sans', sans-serif;width:120px;text-align:center;letter-spacing:0.2px;">2</span>
<span class="t" id="t137" style="left:208.70px;top:672.00px;font-size:15.8px;color:#000;font-weight:bold;font-family:'DejaVu Sans Condensed', 'Liberation Sans', sans-serif;width:120px;text-align:center;letter-spacing:0.1px;">Dennis</span>
<span class="t" id="t138" style="left:382.00px;top:672.00px;font-size:15.8px;color:#000;font-weight:bold;font-family:'DejaVu Sans Condensed', 'Liberation Sans', sans-serif;width:120px;text-align:center;letter-spacing:0.2px;">77</span>
<span class="t" id="t139" style="left:510.00px;top:672.00px;font-size:15.8px;color:#000;font-weight:bold;font-family:'DejaVu Sans Condensed', 'Liberation Sans', sans-serif;width:120px;text-align:center;letter-spacing:0.2px;">75</span>
<span class="t" id="t140" style="left:638.00px;top:672.00px;font-size:15.8px;color:#000;font-weight:bold;font-family:'DejaVu Sans Condensed', 'Liberation Sans', sans-serif;width:120px;text-align:center;letter-spacing:0.2px;">70</span>
<span class="t" id="t141" style="left:766.00px;top:672.00px;font-size:15.8px;color:#000;font-weight:bold;font-family:'DejaVu Sans Condensed', 'Liberation Sans', sans-serif;width:120px;text-align:center;letter-spacing:0.2px;">222</span>
<span class="t" id="t142" style="left:894.00px;top:672.00px;font-size:15.8px;color:#000;font-weight:bold;font-family:'DejaVu Sans Condensed', 'Liberation Sans', sans-serif;width:120px;text-align:center;letter-spacing:0.2px;">1</span>
<span class="t" id="t143" style="left:208.70px;top:702.00px;font-size:15.8px;color:#000;font-weight:bold;font-family:'DejaVu Sans Condensed', 'Liberation Sans', sans-serif;width:120px;text-align:center;letter-spacing:0.1px;">David</span>
<span class="t" id="t144" style="left:382.00px;top:702.00px;font-size:15.8px;color:#000;font-weight:bold;font-family:'DejaVu Sans Condensed', 'Liberation Sans', sans-serif;width:120px;text-align:center;letter-spacing:0.2px;">57</span>
<span class="t" id="t145" style="left:510.00px;top:702.00px;font-size:15.8px;color:#000;font-weight:bold;font-family:'DejaVu Sans Condensed', 'Liberation Sans', sans-serif;width:120px;text-align:center;letter-spacing:0.2px;">66</span>
<span class="t" id="t146" style="left:638.00px;top:702.00px;font-size:15.8px;color:#000;font-weight:bold;font-family:'DejaVu Sans Condensed', 'Liberation Sans', sans-serif;width:120px;text-align:center;letter-spacing:0.2px;">52</span>
<span class="t" id="t147" style="left:766.00px;top:702.00px;font-size:15.8px;color:#000;font-weight:bold;font-family:'DejaVu Sans Condensed', 'Liberation Sans', sans-serif;width:120px;text-align:center;letter-spacing:0.2px;">175</span>
<span class="t" id="t148" style="left:894.00px;top:702.00px;font-size:15.8px;color:#000;font-weight:bold;font-family:'DejaVu Sans Condensed', 'Liberation Sans', sans-serif;width:120px;text-align:center;letter-spacing:0.2px;">3</span>
<span class="t" id="t149" style="left:208.70px;top:732.00px;font-size:15.8px;color:#000;font-weight:bold;font-family:'DejaVu Sans Condensed', 'Liberation Sans', sans-serif;width:120px;text-align:center;letter-spacing:0.1px;">Ella</span>
<span class="t" id="t150" style="left:382.00px;top:732.00px;font-size:15.8px;color:#000;font-weight:bold;font-family:'DejaVu Sans Condensed', 'Liberation Sans', sans-serif;width:120px;text-align:center;letter-spacing:0.2px;">36</span>
<span class="t" id="t151" style="left:510.00px;top:732.00px;font-size:15.8px;color:#000;font-weight:bold;font-family:'DejaVu Sans Condensed', 'Liberation Sans', sans-serif;width:120px;text-align:center;letter-spacing:0.2px;">74</span>
<span class="t" id="t152" style="left:638.00px;top:732.00px;font-size:15.8px;color:#000;font-weight:bold;font-family:'DejaVu Sans Condensed', 'Liberation Sans', sans-serif;width:120px;text-align:center;letter-spacing:0.2px;">35</span>
<span class="t" id="t153" style="left:766.00px;top:732.00px;font-size:15.8px;color:#000;font-weight:bold;font-family:'DejaVu Sans Condensed', 'Liberation Sans', sans-serif;width:120px;text-align:center;letter-spacing:0.2px;">145</span>
<span class="t" id="t154" style="left:894.00px;top:732.00px;font-size:15.8px;color:#000;font-weight:bold;font-family:'DejaVu Sans Condensed', 'Liberation Sans', sans-serif;width:120px;text-align:center;letter-spacing:0.2px;">7</span>
<span class="t" id="t155" style="left:208.70px;top:762.00px;font-size:15.8px;color:#000;font-weight:bold;font-family:'DejaVu Sans Condensed', 'Liberation Sans', sans-serif;width:120px;text-align:center;letter-spacing:0.1px;">Peggy</span>
<span class="t" id="t156" style="left:382.00px;top:762.00px;font-size:15.8px;color:#000;font-weight:bold;font-family:'DejaVu Sans Condensed', 'Liberation Sans', sans-serif;width:120px;text-align:center;letter-spacing:0.2px;">45</span>
<span class="t" id="t157" style="left:510.00px;top:762.00px;font-size:15.8px;color:#000;font-weight:bold;font-family:'DejaVu Sans Condensed', 'Liberation Sans', sans-serif;width:120px;text-align:center;letter-spacing:0.2px;">44</span>
<span class="t" id="t158" style="left:638.00px;top:762.00px;font-size:15.8px;color:#000;font-weight:bold;font-family:'DejaVu Sans Condensed', 'Liberation Sans', sans-serif;width:120px;text-align:center;letter-spacing:0.2px;">71</span>
<span class="t" id="t159" style="left:766.00px;top:762.00px;font-size:15.8px;color:#000;font-weight:bold;font-family:'DejaVu Sans Condensed', 'Liberation Sans', sans-serif;width:120px;text-align:center;letter-spacing:0.2px;">160</span>
<span class="t" id="t160" style="left:894.00px;top:762.00px;font-size:15.8px;color:#000;font-weight:bold;font-family:'DejaVu Sans Condensed', 'Liberation Sans', sans-serif;width:120px;text-align:center;letter-spacing:0.2px;">5</span>
</main>
<div id="sheettabs">
<div class="b" style="left:0px;top:823px;width:1516px;height:28px;background:#f2f4f6;"></div>
<div class="b" style="left:0px;top:822px;width:1495px;height:1px;background:#e3e5e9;"></div>
<div class="b" style="left:146px;top:823px;width:87px;height:27px;background:#ffffff;border-left:1px solid #e6e8eb;border-right:1px solid #e6e8eb;box-sizing:border-box;"></div>
<svg width="1568" height="882" viewBox="0 0 1568 882" fill="none" stroke-linecap="round" stroke-linejoin="round">
<g id="tabs" stroke="#b9bdc5" stroke-width="1.300">
<path d="M18.500 829.500v14M28.500 829.800l-6.500 6.700 6.500 6.700M58.800 829.800l-6.500 6.700 6.500 6.700M82.700 829.800l6.500 6.700-6.500 6.700M113.300 829.800l6.500 6.700-6.500 6.700M123.500 829.500v14"/>
<path d="M240 836.800h15.500M247.700 829v15.500" stroke="#3d4656" stroke-width="1.400" stroke-linecap="butt"/>
</g>
</svg>
<span class="t" id="t161" style="left:166.90px;top:831.00px;font-size:14.5px;color:#2f9c78;font-weight:bold;letter-spacing:-0.040px;">Sheet1</span>
</div>
<div id="scrollbars" role="presentation">
<div class="b" style="left:1498px;top:251px;width:17px;height:572px;background:#e8eaee;"></div>
<div class="b" style="left:1499px;top:276px;width:15px;height:434px;background:#d5d8de;border-radius:7.5px;"></div>
<div class="b" style="left:892px;top:828px;width:584.5px;height:17px;background:#e8eaee;"></div>
<div class="b" style="left:917.5px;top:829px;width:478.5px;height:15px;background:#d5d8de;border-radius:7.5px;"></div>
<svg width="1568" height="882" viewBox="0 0 1568 882" fill="none" stroke-linecap="round" stroke-linejoin="round">
<g id="scroll" stroke="none" fill="#8e96a6">
<path d="M1502.400 264.200h7.200l-3.600-4.400zM1502.400 809.800h7.200l-3.600 4.400zM905.300 832.200v8l-4.400-4zM1463.800 832.200v8l4.400-4z"/>
<path d="M1500 240.300h12.500M1500 243.300h12.500M881.500 829.500v13M884.500 829.500v13M1484.300 829.500v13M1486.900 829.500v13" stroke="#c3c7ce" stroke-width="1" stroke-linecap="butt"/>
</g>
</svg>
</div>
<aside id="sidepanel">
<div class="b" style="left:1516px;top:180px;width:52px;height:702px;background:#f4f5f7;border-left:1px solid #e4e6ea;box-sizing:border-box;"></div>
<div class="b" style="left:1517px;top:796px;width:51px;height:1px;background:#e3e5e9;"></div>
<svg width="1568" height="882" viewBox="0 0 1568 882" fill="none" stroke-linecap="round" stroke-linejoin="round">
<g id="side" stroke-width="1.400">
<path d="M1531.200 194.700h24.300M1531.200 198.300h24.300" stroke="#c9ccd2" stroke-width="1.100" stroke-linecap="butt"/>
<g stroke="#b7bbc3"><rect x="1534.400" y="225.300" width="2.600" height="2.600" rx=".6"/><rect x="1539.600" y="225.300" width="12.400" height="2.600" rx="1.200"/><rect x="1534.400" y="231" width="2.600" height="11" rx="1.200"/>
<path d="M1550.500 233.500v7.500h-9M1547.800 236l2.700-2.700 2.700 2.700M1543.700 238.300l-2.700 2.700 2.700 2.700"/></g>
<path d="M1537 270.200v17.800l4.300-3.800 3 7.200 3.200-1.400-3-7 5.800-.6z" fill="#ffffff" stroke="#3d4656" stroke-width="1.500" stroke-linejoin="miter"/>
<g stroke="#9da3ad" stroke-width="1.300"><path d="M1538.500 318.500h14.500M1533.700 329.200h11.500M1549.800 329.200h3.200"/><circle cx="1536.200" cy="318.500" r="2.300"/><circle cx="1547.500" cy="329.200" r="2.300"/></g>
<circle cx="1542.400" cy="369.200" r="9.300" stroke="#3d4656"/>
<path d="M1539.300 366.500a3.100 3.100 0 1 1 4.700 2.600c-1.100.7-1.600 1.300-1.600 2.600" stroke="#3d4656" stroke-width="1.400"/><path d="M1542.400 374.600v.2" stroke="#3d4656" stroke-width="1.700"/>
<g stroke="#c5c9cf" stroke-width="1.300"><rect x="1534.700" y="818.700" width="7" height="7" rx="1.500"/><rect x="1544.700" y="818.700" width="7" height="7" rx="1.500"/><rect x="1534.700" y="828.700" width="7" height="7" rx="1.500"/><rect x="1544.700" y="828.700" width="7" height="7" rx="1.500"/></g>
</g>
</svg>
</aside>
<footer id="statusbar">
<div class="b" style="left:0px;top:851px;width:1516px;height:31px;background:#f3f4f6;"></div>
<div class="b" style="left:0px;top:850px;width:1568px;height:1px;background:#e4e6ea;"></div>
<div class="b" style="left:1081px;top:851.5px;width:29.5px;height:30.5px;background:#e2e5e9;"></div>
<svg width="1568" height="882" viewBox="0 0 1568 882" fill="none" stroke-linecap="round" stroke-linejoin="round">
<g id="status" stroke="#434b5a" stroke-width="1.300">
<circle cx="18.900" cy="861.900" r="4.600"/><circle cx="18.900" cy="861.900" r="1.900"/>
<path d="M25.600 860h6.600a1.500 1.500 0 0 1 1.500 1.500v4h-2.700M31 860.600v14.400a1.500 1.500 0 0 1-1.500 1.500h-1M18.500 868.600v4"/>
<rect x="15.600" y="872.600" width="13" height="3.900" rx="1.200"/>
<!-- doc clock -->
<path d="M1000 861v-2.400h12.400v13.600h-2.400" stroke="#c6c9cf" />
<rect x="997" y="861.200" width="12.900" height="14" rx="1"/><path d="M1003.300 865.500v3.300h2.700" stroke-width="1.200"/>
<!-- cross -->
<path d="M1031.800 858.700h6.400v5.100h6.400v6.400h-6.400v5.100h-6.400v-5.100h-6.400v-6.400h6.400z" stroke-width="1.300"/><path d="M1031.800 863.800h6.400v6.400h-6.400z" stroke-width="1.100"/>
<path d="M1049 866h6l-3.0 3.2z" fill="#7d8593" stroke="none"/>
<path d="M1070.500 858v17.500M1226.500 858v17.500" stroke="#dcdfe3" stroke-width="1"/>
<!-- grid view -->
<rect x="1086.500" y="860.200" width="19.300" height="15" rx="1" fill="#dfe2e6"/><path d="M1086.500 865.200h19.300M1086.500 870.200h19.300M1093 860.200v15M1099.400 860.200v15" stroke-linecap="butt"/>
<!-- split view -->
<rect x="1118.500" y="857.900" width="18" height="18.200" rx="1"/><rect x="1120.600" y="860" width="13.800" height="14" stroke-width="1"/><path d="M1127.500 860v14" stroke-width="1.200"/>
<!-- page view -->
<rect x="1150.600" y="858.700" width="19" height="16.200" rx="1"/><path d="M1157 858.700v9.300M1163.200 858.700v9.300M1150.600 868h12.600" stroke-linecap="butt" stroke-width="1.200"/>
<!-- eye -->
<path d="M1181.300 869c2.500-3.700 5.700-5.600 9.800-5.600s7.300 1.900 9.800 5.600c-2.500 3.700-5.700 5.600-9.800 5.600s-7.300-1.900-9.800-5.600z"/><circle cx="1191.100" cy="869" r="3"/>
<path d="M1191.100 857.500v3M1184.300 859.300l1.700 2.400M1197.900 859.300l-1.700 2.400" stroke-width="1.200"/>
<path d="M1205 866h6l-3.0 3.2z" fill="#7d8593" stroke="none"/><path d="M1271 866h6l-3.0 3.2z" fill="#7d8593" stroke="none"/>
<!-- zoom slider -->
<path d="M1291.800 867.200h12.500M1505 867.200h13.500M1511.700 860.400v13.600" stroke="#2b3350" stroke-width="2.400" stroke-linecap="butt"/>
<path d="M1400 867.200h101" stroke="#d3d6db" stroke-width="1"/><path d="M1311 867.200h76" stroke="#4a5261" stroke-width="1"/>
<circle cx="1393.300" cy="867" r="7.300" fill="#f1f2f4" stroke="#555d6b" stroke-width="1.200"/>
<path d="M1535 864v-4.500h4.500M1535.300 859.800l5.300 5.300M1551 864v-4.500h-4.500M1550.700 859.800l-5.300 5.300M1535 871v4.500h4.500M1535.300 875.200l5.300-5.300M1551 871v4.500h-4.500M1550.700 875.200l-5.300-5.300" stroke="#4a5261" stroke-width="1.200"/>
</g>
</svg>
<span class="t" id="t162" style="left:61.01px;top:861.00px;font-size:14.3px;color:#4a5261;letter-spacing:0.314px;">Average=0  Count=2  Sum=0</span>
<span class="t" id="t163" style="left:1236.51px;top:861.00px;font-size:14.3px;color:#4a5261;letter-spacing:0.192px;">90%</span>
</footer>
<div id="overlay" aria-hidden="true">
<svg width="1568" height="882" viewBox="0 0 1568 882" fill="none" stroke-linecap="round" stroke-linejoin="round">
<g id="overlay-art" stroke-linecap="butt">
<defs>
<linearGradient id="gA" gradientUnits="userSpaceOnUse" x1="0" y1="832" x2="0" y2="881">
<stop offset="0" stop-color="#1a72e0"/><stop offset=".26" stop-color="#1b7ee9"/><stop offset=".4" stop-color="#2a90f2"/><stop offset=".55" stop-color="#4f9bf8"/><stop offset=".75" stop-color="#5aa6f8"/><stop offset="1" stop-color="#6fb9f8"/></linearGradient>
<linearGradient id="gB" gradientUnits="userSpaceOnUse" x1="0" y1="832" x2="0" y2="881">
<stop offset="0" stop-color="#6bb4f9"/><stop offset=".3" stop-color="#58a2f9"/><stop offset=".55" stop-color="#4f9bf8"/><stop offset=".75" stop-color="#5aa6f8"/><stop offset="1" stop-color="#6fb9f8"/></linearGradient>
<clipPath id="cTop"><rect x="1290" y="832.300" width="90" height="60"/></clipPath>
</defs>
<circle cx="726" cy="364" r="30" fill="rgba(255,191,13,0.55)"/>
<path d="M726.200 364.200v25.800l6.300-5.500 6.200 12 3.400-1.700-5.500-12.300 7.600-.9z" fill="#ffffff" stroke="#1d1d1d" stroke-width="1.200" stroke-linejoin="miter"/>
<g clip-path="url(#cTop)">
<path d="M1319.600 875.300L1341.400 830" stroke="url(#gB)" stroke-width="10.400" stroke-linecap="round"/>
<path d="M1323 836.750H1301.500L1319.300 875.200" stroke="url(#gA)" stroke-width="8.900" stroke-linecap="round" stroke-linejoin="round"/>
<path d="M1322 832.300h4.600q3 0 2.200 2.800l-4.300 12.800-4.200-6.700z" fill="url(#gA)"/>
<path d="M1336.400 856.200l6.500 8.800 3.100 7-2.400 7.500-4.400-2-6.500-12.800z" fill="url(#gB)"/>
<path d="M1348 836.750H1361L1343.600 875.300" stroke="url(#gA)" stroke-width="8.900" stroke-linecap="round" stroke-linejoin="round"/>
<path d="M1346.900 832.300h2.600v8.900h-7.100z" fill="#1a6fd8"/>
</g>
</g>
</svg>
<span class="t" id="t164" style="left:1374.68px;top:833.00px;font-size:24px;color:#2b2b2b;letter-spacing:2.387px;">WPS Academy</span>
<span class="t" id="t165" style="left:1375.20px;top:864.00px;font-size:14.5px;color:#333333;letter-spacing:1.030px;">Free office suite tutorials</span>
</div>
</body></html>
